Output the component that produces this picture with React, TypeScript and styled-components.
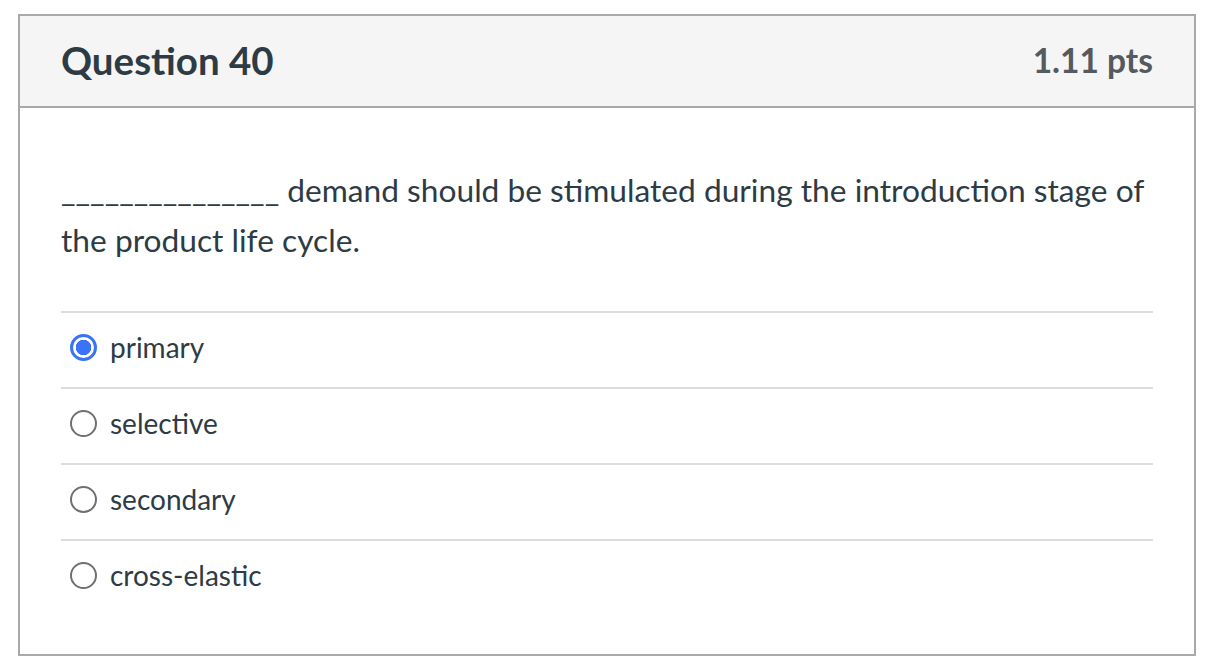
import React from 'react'
import styled, { createGlobalStyle } from 'styled-components'

const GlobalStyle = createGlobalStyle`
	html, body {
		margin: 0;
		padding: 0;
		background: #ffffff;
	}
	body {
		font-family: Lato, 'Noto Sans', sans-serif;
		color: #2d3b45;
	}
`

type Answer = {
	id: string
	label: string
	checked?: boolean
}

const answers: Answer[] = [
	{ id: 'a1', label: 'primary', checked: true },
	{ id: 'a2', label: 'selective' },
	{ id: 'a3', label: 'secondary' },
	{ id: 'a4', label: 'cross-elastic' },
]

const App = (): JSX.Element => (
	<>
		<GlobalStyle />
		<Page>
			<Card>
				<Header>
					<Title>Question 40</Title>
					<Points>1.11 pts</Points>
				</Header>
				<Body>
					<QuestionText>
						_______________ demand should be stimulated during the introduction stage of the product life cycle.
					</QuestionText>
					<AnswerList>
						{answers.map((el) => (
							<AnswerRow key={el.id}>
								<Radio checked={!!el.checked} />
								<AnswerLabel>{el.label}</AnswerLabel>
							</AnswerRow>
						))}
					</AnswerList>
				</Body>
			</Card>
		</Page>
	</>
)

export default App

const Page = styled.div`
	padding: 14px 0 0 18px;
`

const Card = styled.section`
	width: 1178px;
	height: 642px;
	box-sizing: border-box;
	border: 2px solid #a9a9a9;
	display: flex;
	flex-direction: column;
`

const Header = styled.header`
	height: 92px;
	box-sizing: border-box;
	background: #f5f5f5;
	border-bottom: 2px solid #a9a9a9;
	display: flex;
	align-items: center;
	justify-content: space-between;
	padding: 0 41px 2px 41px;
`

const Title = styled.h2`
	margin: 0;
	font-size: 38.5px;
	font-weight: 700;
	color: #2d3b45;
`

const Points = styled.span`
	font-size: 33.5px;
	font-weight: 700;
	color: #555a5e;
`

const Body = styled.div`
	padding: 57px 41px 0 41px;
`

const QuestionText = styled.p`
	margin: 0 0 46px 0;
	font-size: 31.7px;
	line-height: 50px;
	color: #2d3b45;
`

const AnswerList = styled.ul`
	list-style: none;
	margin: 0;
	padding: 0;
`

const AnswerRow = styled.li`
	height: 76px;
	box-sizing: border-box;
	border-top: 2px solid #dddddd;
	display: flex;
	align-items: center;
	gap: 13px;
	padding: 0 0 6px 9px;
`

const Radio = styled.span<{ checked: boolean }>`
	width: 27px;
	height: 27px;
	box-sizing: border-box;
	border-radius: 50%;
	flex-shrink: 0;
	border: ${({ checked }) => (checked ? '3px solid #3b73f6' : '2px solid #707070')};
	background: ${({ checked }) => (checked ? 'radial-gradient(circle, #3b73f6 0 7.5px, #ffffff 8px)' : '#ffffff')};
`

const AnswerLabel = styled.span`
	font-size: 28px;
	color: #2d3b45;
`
